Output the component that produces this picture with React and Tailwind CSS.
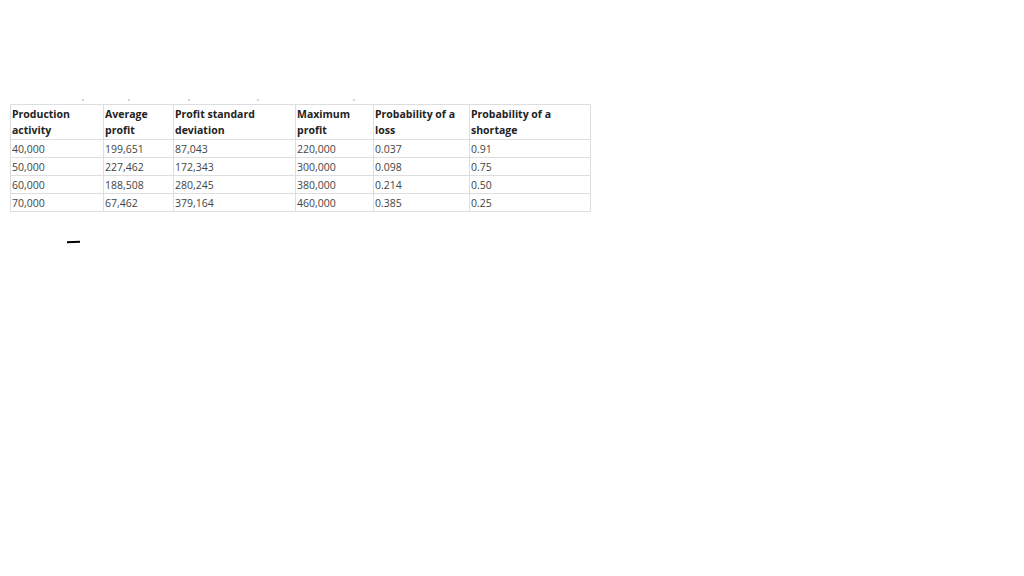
import React from "react";

const columns = [
  { label: ["Production", "activity"], width: "w-[93px]" },
  { label: ["Average", "profit"], width: "w-[70px]" },
  { label: ["Profit standard", "deviation"], width: "w-[122px]" },
  { label: ["Maximum", "profit"], width: "w-[78px]" },
  { label: ["Probability of a", "loss"], width: "w-[96px]" },
  { label: ["Probability of a", "shortage"], width: "w-[121px]" },
];

const rows = [
  ["40,000", "199,651", "87,043", "220,000", "0.037", "0.91"],
  ["50,000", "227,462", "172,343", "300,000", "0.098", "0.75"],
  ["60,000", "188,508", "280,245", "380,000", "0.214", "0.50"],
  ["70,000", "67,462", "379,164", "460,000", "0.385", "0.25"],
];

// faint bits of the cut-off line above the table
const specks = ["w-[46px]", "w-[60px]", "w-[69px]", "w-[96px]", "w-[10px]"];

const App = () => {
  return (
    <div className="w-[1024px] h-[576px] bg-white overflow-hidden font-['Open_Sans',sans-serif]">
      <div className="mt-[99px] pl-[82px] flex h-[5px]">
        {specks.map((w, i) => (
          <div key={i} className={`${w} shrink-0`}>
            <span className="block w-[2px] h-[2px] bg-gray-300" />
          </div>
        ))}
      </div>

      <table className="ml-[10px] border-collapse table-fixed text-[10.5px] w-[580px]">
        <thead>
          <tr>
            {columns.map((col, i) => (
              <th
                key={i}
                className={`${col.width} border border-[#dedede] text-left align-top font-bold text-[#222] px-[1px] pt-[1px] pb-[1px] leading-[16px]`}
              >
                {col.label[0]}
                <br />
                {col.label[1]}
              </th>
            ))}
          </tr>
        </thead>
        <tbody>
          {rows.map((row, r) => (
            <tr key={r}>
              {row.map((cell, c) => (
                <td
                  key={c}
                  className="border border-[#dedede] px-[1px] pt-[2px] h-[18px] leading-[15px] text-[#444]"
                >
                  {cell}
                </td>
              ))}
            </tr>
          ))}
        </tbody>
      </table>

      <div className="ml-[67px] mt-[29px] w-[13px] h-[2px] bg-black -rotate-3" />
    </div>
  );
};

export default App;
